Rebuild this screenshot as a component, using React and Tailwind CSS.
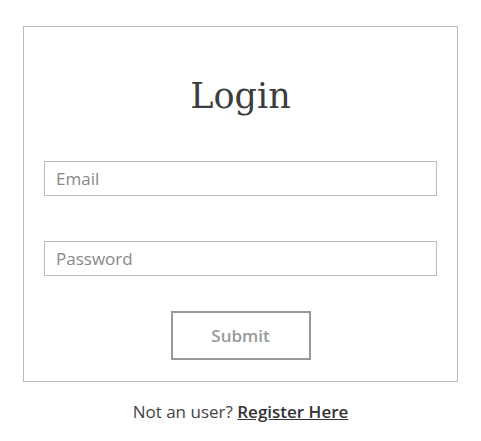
import React from 'react';

const App = () => {
    return (
        <div className="min-h-screen bg-white pt-[26px] font-['Open_Sans',sans-serif]">
            {/* Card */}
            <div className="ml-[23px] w-[435px] border border-[#bbbbbb] px-[20px] pt-[45px] pb-[21px]">
                <h1 className="text-center font-['DejaVu_Serif',serif] text-[35px] leading-[48px] text-[#3d3d3d]">
                    Login
                </h1>

                <form className="mt-[41px] flex flex-col" onSubmit={(e) => e.preventDefault()}>
                    <input
                        type="email"
                        placeholder="Email"
                        className="h-[35px] w-full border border-[#bbbbbb] px-[11px] text-[17px] text-[#444] placeholder:text-[#888888] outline-none"
                    />
                    <input
                        type="password"
                        placeholder="Password"
                        className="mt-[45px] h-[35px] w-full border border-[#bbbbbb] px-[11px] text-[17px] text-[#444] placeholder:text-[#888888] outline-none"
                    />
                    <div className="mt-[35px] flex justify-center">
                        <button
                            type="submit"
                            className="h-[49px] w-[140px] border-2 border-[#999999] bg-white text-[17px] font-semibold text-[#999999]"
                        >
                            Submit
                        </button>
                    </div>
                </form>
            </div>

            {/* Footer link */}
            <p className="mt-[17px] text-center text-[17px] text-[#444444]">
                Not an user?{' '}
                <a href="#" className="font-semibold text-[#333333] underline">
                    Register Here
                </a>
            </p>
        </div>
    );
};

export default App;
